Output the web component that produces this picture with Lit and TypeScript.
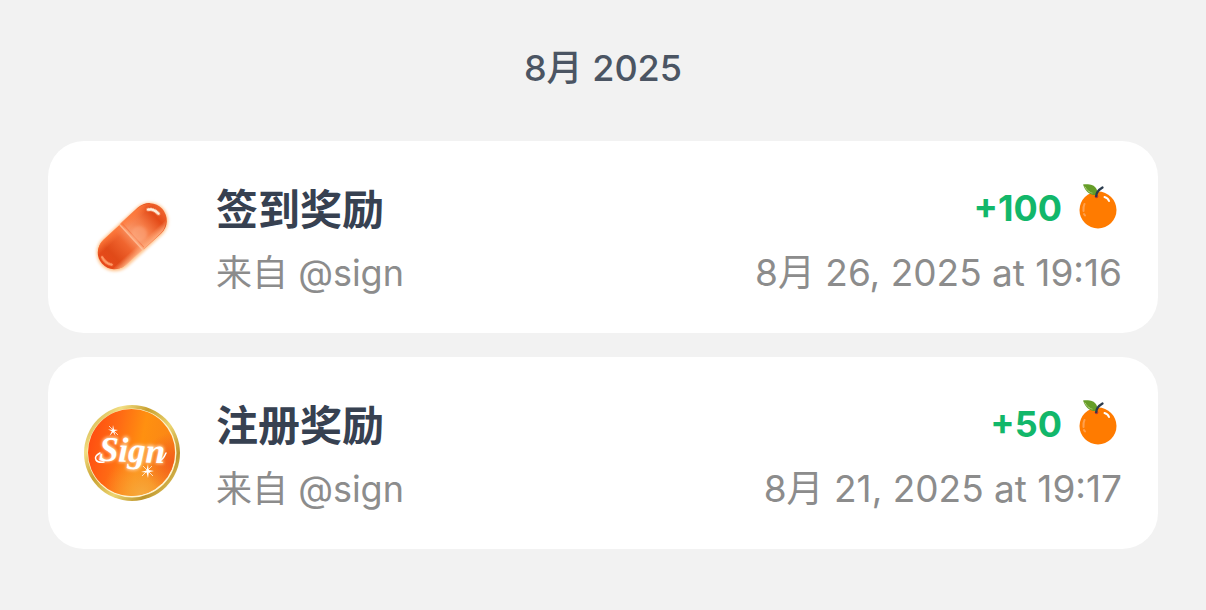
import { LitElement, html, css, svg } from "lit";
import { customElement, property } from "lit/decorators.js";

interface Reward {
  icon: "pill" | "coin";
  title: string;
  source: string;
  amount: number;
  date: string;
}

const rewards: Reward[] = [
  { icon: "pill", title: "签到奖励", source: "来自 @sign", amount: 100, date: "8月 26, 2025 at 19:16" },
  { icon: "coin", title: "注册奖励", source: "来自 @sign", amount: 50, date: "8月 21, 2025 at 19:17" },
];

const pill = svg`
  <defs>
    <linearGradient id="left" x1="0" x2="1" y1="0" y2="0">
      <stop offset="0" stop-color="#e8481a" />
      <stop offset="0.35" stop-color="#e04a18" />
      <stop offset="0.75" stop-color="#f0652f" />
      <stop offset="1" stop-color="#f98e5c" />
    </linearGradient>
    <linearGradient id="right" x1="0" x2="1" y1="0" y2="0">
      <stop offset="0" stop-color="#fa9a6c" />
      <stop offset="0.4" stop-color="#f57a45" />
      <stop offset="0.75" stop-color="#e34a17" />
      <stop offset="1" stop-color="#f0642d" />
    </linearGradient>
    <linearGradient id="sheen" x1="0" x2="0" y1="0" y2="1">
      <stop offset="0" stop-color="#ff7a3c" stop-opacity="0.9" />
      <stop offset="0.25" stop-color="#ff7a3c" stop-opacity="0" />
      <stop offset="0.8" stop-color="#ffab78" stop-opacity="0" />
      <stop offset="1" stop-color="#ffb083" stop-opacity="0.9" />
    </linearGradient>
    <filter id="soft" x="-20%" y="-30%" width="140%" height="160%"><feGaussianBlur stdDeviation="1.4" /></filter>
    <filter id="fine" x="-40%" y="-80%" width="180%" height="260%"><feGaussianBlur stdDeviation="0.7" /></filter>
  </defs>
  <g transform="translate(48 47.5) rotate(-42.5)">
    <rect x="-42" y="-18" width="84" height="37" rx="18.5" fill="#ffc48e" filter="url(#soft)" />
    <path d="M0-16.500H-24A16.500 16.500 0 0 0-24 16.500H0Z" fill="url(#left)" />
    <path d="M0-17.500H23.500A17.500 17.500 0 0 1 23.500 17.500H0Z" fill="url(#right)" />
    <rect x="-40" y="-17" width="80" height="34" rx="17" fill="url(#sheen)" />
    <path d="M-1-17V17" stroke="#ffc4a0" stroke-width="1.500" opacity=".8" />
    <path d="M1.500-16V16" stroke="#f26a38" stroke-width="1" opacity=".6" />
    <path d="M4-10H24" stroke="#ffc9a8" stroke-width="2.500" stroke-linecap="round" filter="url(#fine)" opacity=".5" />
    <path d="M-25-9H-7" stroke="#ff9b69" stroke-width="2.500" stroke-linecap="round" filter="url(#fine)" opacity=".8" />
    <path d="M30-9Q35-6 35 1" fill="none" stroke="#fff0dc" stroke-width="3" stroke-linecap="round" filter="url(#fine)" />
    <path d="M-36-5Q-38 2-34 7" fill="none" stroke="#ff9c67" stroke-width="2.500" stroke-linecap="round" filter="url(#fine)" />
    <path d="M-28 14H-14" stroke="#ffbd94" stroke-width="2" stroke-linecap="round" filter="url(#fine)" />
    <ellipse cx="7" cy="3" rx="8" ry="8" fill="#ffb48d" opacity=".4" filter="url(#soft)" />
  </g>`;

const coin = svg`
  <defs>
    <linearGradient id="rim" x1="0" x2="1" y1="0.1" y2="0.9">
      <stop offset="0" stop-color="#c9a638" />
      <stop offset="0.2" stop-color="#f2de83" />
      <stop offset="0.38" stop-color="#c8a02f" />
      <stop offset="0.6" stop-color="#ecd571" />
      <stop offset="0.8" stop-color="#bd942b" />
      <stop offset="1" stop-color="#ead16b" />
    </linearGradient>
    <linearGradient id="face" x1="0" x2="1" y1="0.35" y2="0.55">
      <stop offset="0" stop-color="#ff4d10" />
      <stop offset="0.3" stop-color="#ff6a14" />
      <stop offset="0.6" stop-color="#ff9010" />
      <stop offset="1" stop-color="#f98417" />
    </linearGradient>
    <radialGradient id="amber" cx="0.62" cy="0.98" r="0.45">
      <stop offset="0" stop-color="#f6a93d" />
      <stop offset="1" stop-color="#f6a03a" stop-opacity="0" />
    </radialGradient>
    <radialGradient id="ember" cx="0.98" cy="0.62" r="0.35">
      <stop offset="0" stop-color="#f35c1c" />
      <stop offset="1" stop-color="#f35c1c" stop-opacity="0" />
    </radialGradient>
    <filter id="glow" x="-20%" y="-30%" width="140%" height="160%"><feGaussianBlur stdDeviation="1.8" /></filter>
  </defs>
  <circle cx="48" cy="48" r="48" fill="url(#rim)" />
  <circle cx="48" cy="48" r="44.500" fill="#fff3d0" />
  <circle cx="47.500" cy="47.500" r="43.500" fill="url(#face)" />
  <circle cx="47.500" cy="47.500" r="43.500" fill="url(#amber)" />
  <circle cx="47.500" cy="47.500" r="43.500" fill="url(#ember)" />
  <g transform="rotate(2 48 48)" class="script">
    <text x="48" y="57" text-anchor="middle" fill="#ffd9a8" stroke="#ffc48a" stroke-width="1.500" filter="url(#glow)">Sign</text>
    <text x="48" y="57" text-anchor="middle" fill="#fff">Sign</text>
  </g>
  <path d="M16 48Q10 51 12 55Q14 58 20 57M75 56Q79 55 82 48" fill="none" stroke="#fff" stroke-width="1.500" stroke-linecap="round" />
  <g fill="#fff">
    <path d="M29 20L30 24.500L34 25L30.300 26.300L31.500 31L29 27.300L25.500 31L27.800 26.200L24 24.400L28.400 24.700Z" />
    <path d="M64 59L64.600 65L70 66L64.800 67.300L64 73L62.600 67.500L57 67L62.400 65.400Z" />
  </g>
  <path d="M25 21L34 30M59 61L69 71M68 61L58 71" stroke="#fff" stroke-width=".7" />`;

const orange = svg`
  <circle cx="24" cy="26" r="18.500" fill="#ff7b00" />
  <path d="M9 .5C15 0 20 .5 22.500 5C24 8 23.500 10 22.500 11C17 11.500 12 9 9 .5Z" fill="#659d28" />
  <path d="M11 3Q14 8 18 9" fill="none" stroke="#b5d27e" stroke-width="1" stroke-linecap="round" stroke-dasharray="3 1.500" />
  <circle cx="22.500" cy="12.500" r="1.800" fill="#c53b2c" />
  <path d="M22.200 12Q22.500 7 28.500 3.500" fill="none" stroke="#2b3b4d" stroke-width="2.300" stroke-linecap="round" />
  <path d="M30.500 13Q34 14 35 17" fill="none" stroke="#fff" stroke-width="2" stroke-linecap="round" />
  <path d="M10.500 20Q9 23 9.500 27M10 30L11 31.500" fill="none" stroke="#ffa04d" stroke-width="2" stroke-linecap="round" />`;

@customElement("reward-card")
export class RewardCard extends LitElement {
  @property({ attribute: false }) reward!: Reward;

  static styles = css`
    :host {
      display: flex;
      align-items: center;
      gap: 36px;
      padding: 33px 36px;
      border-radius: 36px;
      background: #fff;
    }
    .icon {
      flex: none;
      width: 96px;
      height: 96px;
    }
    .script {
      font: italic bold 35px "Liberation Serif", serif;
    }
    .rows {
      flex: 1;
      min-width: 0;
    }
    .row {
      display: flex;
      align-items: flex-start;
      justify-content: space-between;
      gap: 24px;
    }
    .title,
    .amount,
    .source,
    .date {
      margin: 0;
      white-space: nowrap;
    }
    .title {
      font-size: 42px;
      line-height: 72px;
      font-weight: 700;
      color: #374151;
    }
    .amount {
      display: flex;
      align-items: center;
      gap: 12px;
      font-size: 36px;
      line-height: 68px;
      font-weight: 700;
      color: #12b76a;
    }
    .fruit {
      width: 48px;
      height: 48px;
    }
    .source,
    .date {
      line-height: 54px;
      color: #8c8c8c;
    }
    .source {
      font-size: 36px;
    }
    .date {
      font-size: 37px;
    }
  `;

  render() {
    const r = this.reward;
    return html`
      <svg class="icon" viewBox="0 0 96 96" aria-hidden="true">${r.icon === "pill" ? pill : coin}</svg>
      <div class="rows">
        <div class="row">
          <h2 class="title">${r.title}</h2>
          <p class="amount">
            <span>+${r.amount}</span>
            <svg class="fruit" viewBox="0 0 48 48" aria-hidden="true">${orange}</svg>
          </p>
        </div>
        <div class="row">
          <p class="source">${r.source}</p>
          <time class="date">${r.date}</time>
        </div>
      </div>
    `;
  }
}

@customElement("app-root")
export class AppRoot extends LitElement {
  static styles = css`
    :host {
      display: block;
      box-sizing: border-box;
      min-height: 100vh;
      padding: 40px 48px;
      background: #f2f2f2;
      font-family: Inter, "Noto Sans CJK SC", sans-serif;
    }
    .month {
      margin: 0 0 45px;
      text-align: center;
      font-size: 36px;
      line-height: 56px;
      font-weight: 500;
      color: #4b5563;
    }
    .list {
      display: grid;
      gap: 24px;
    }
  `;

  render() {
    return html`
      <h1 class="month">8月 2025</h1>
      <main class="list">${rewards.map((r) => html`<reward-card .reward=${r}></reward-card>`)}</main>
    `;
  }
}
